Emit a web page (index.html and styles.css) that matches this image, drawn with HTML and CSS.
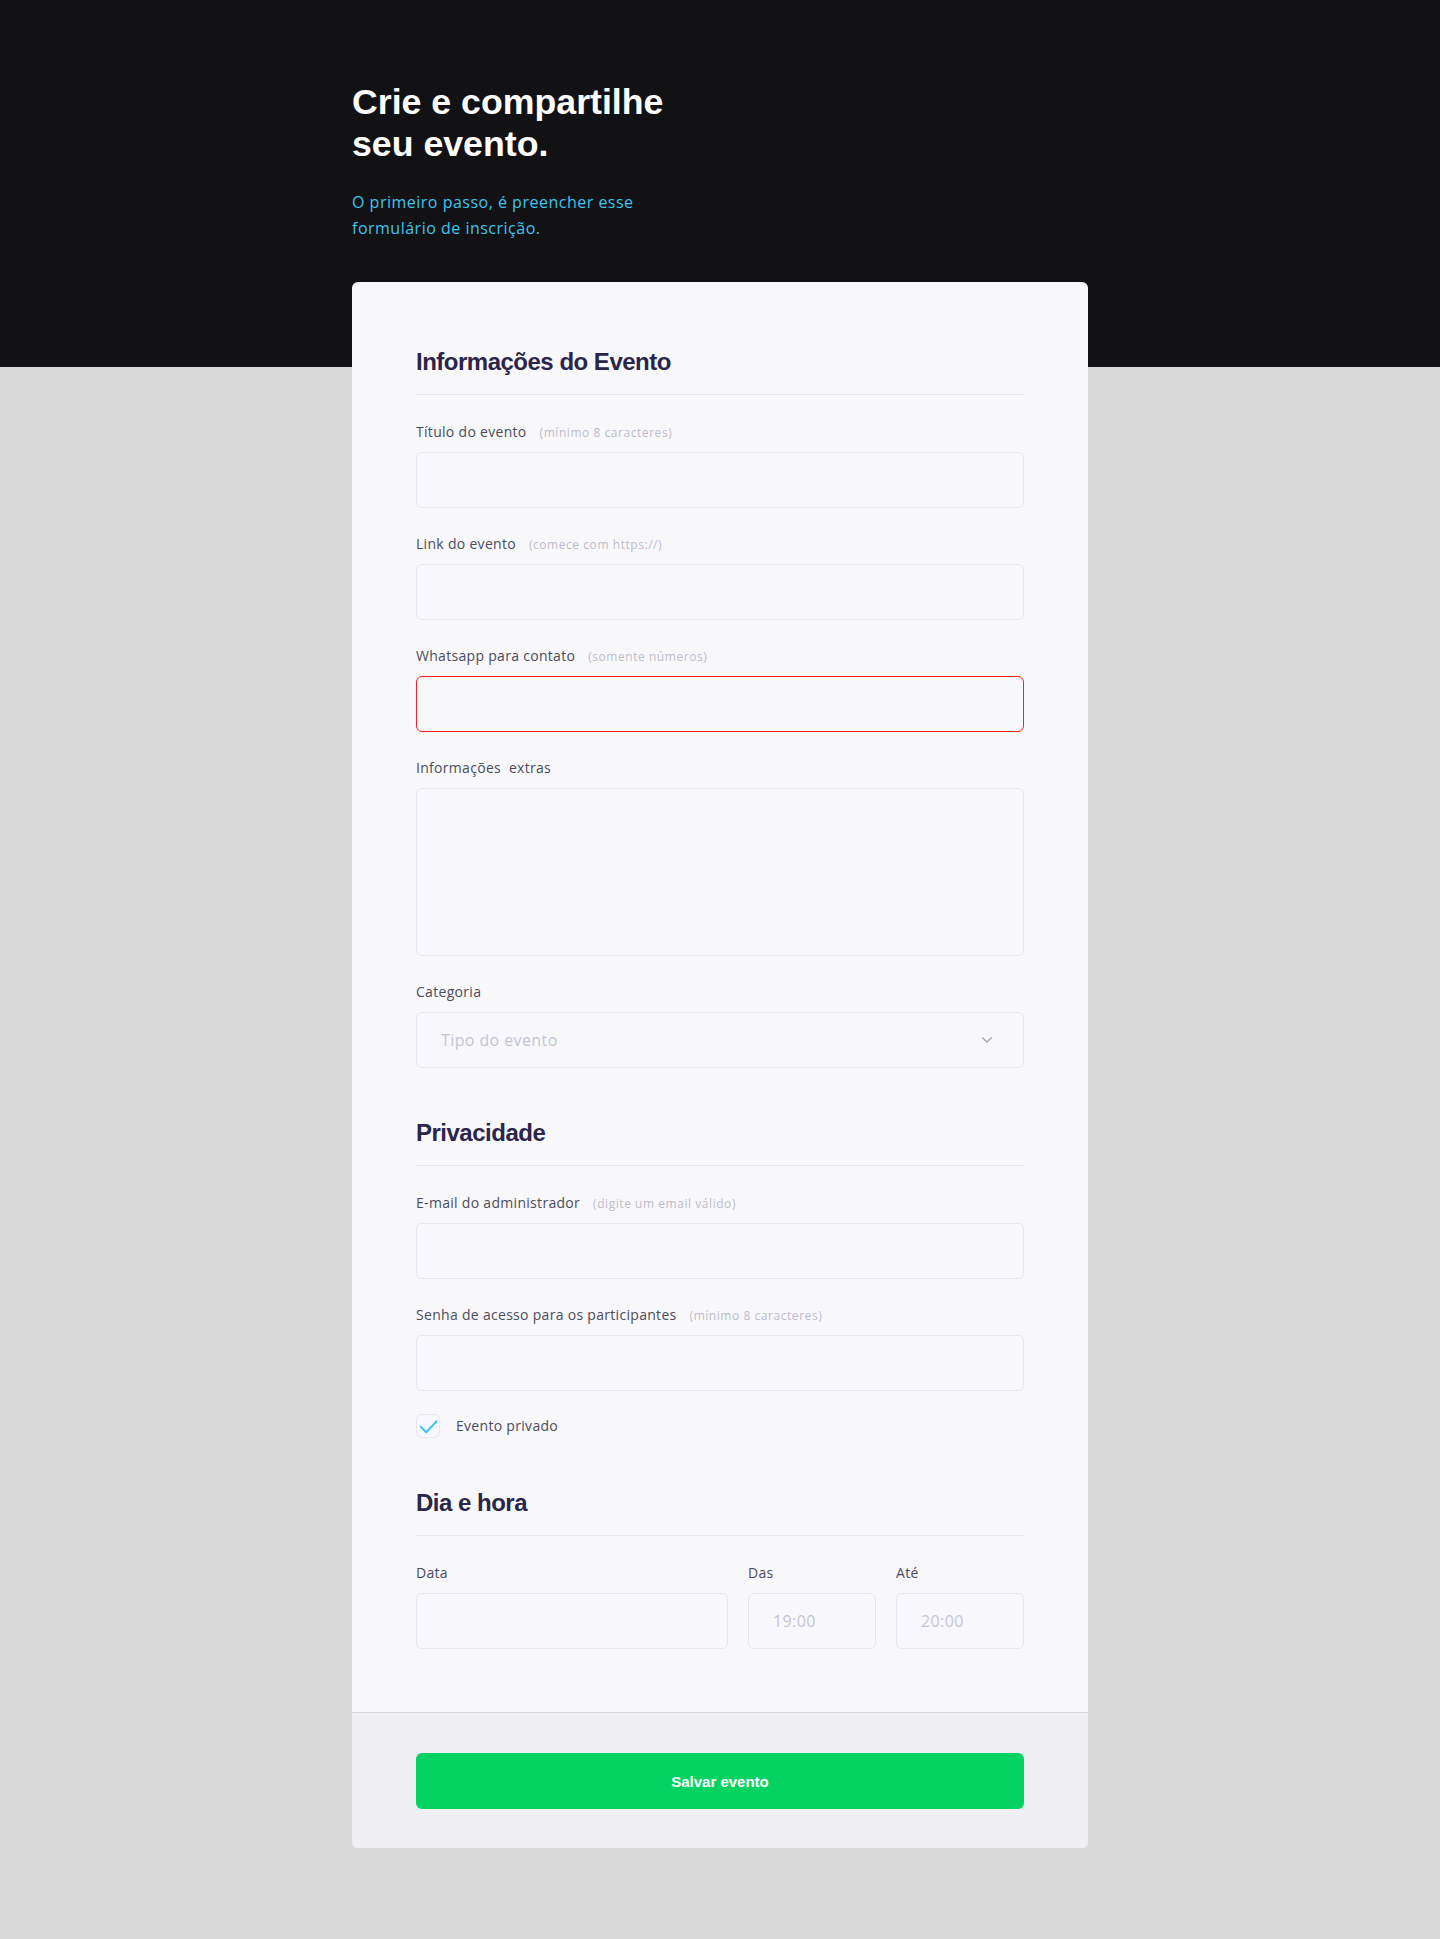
FILE: index.html
```html
<!DOCTYPE html>
<html lang="pt-BR">
<head>
<meta charset="utf-8">
<title>Crie e compartilhe seu evento</title>
<link rel="stylesheet" href="styles.css">
</head>
<body>
<header class="hero">
  <div class="hero-inner">
    <h1 class="hero-title">Crie e compartilhe<br>seu evento.</h1>
    <p class="hero-text">O primeiro passo, é preencher esse<br>formulário de inscrição.</p>
  </div>
</header>
<main class="page">
  <form class="card">
    <div class="card-body">
      <section class="section">
        <h2 class="section-title">Informações do Evento</h2>
        <div class="field">
          <label class="label">Título do evento <span class="hint">(mínimo 8 caracteres)</span></label>
          <input class="input" type="text">
        </div>
        <div class="field">
          <label class="label">Link do evento <span class="hint">(comece com https://)</span></label>
          <input class="input" type="text">
        </div>
        <div class="field">
          <label class="label">Whatsapp para contato <span class="hint">(somente números)</span></label>
          <input class="input input-error" type="text">
        </div>
        <div class="field">
          <label class="label">Informações&nbsp; extras</label>
          <textarea class="input textarea"></textarea>
        </div>
        <div class="field">
          <label class="label">Categoria</label>
          <div class="input select">
            <span class="placeholder">Tipo do evento</span>
            <svg class="chevron" width="12" height="8" viewBox="0 0 12 8"><path d="M1.5 1.8 L6 6 L10.5 1.8" fill="none" stroke="#a9a9b6" stroke-width="1.4" stroke-linecap="round" stroke-linejoin="round"/></svg>
          </div>
        </div>
      </section>

      <section class="section">
        <h2 class="section-title">Privacidade</h2>
        <div class="field">
          <label class="label">E-mail do administrador <span class="hint">(digite um email válido)</span></label>
          <input class="input" type="text">
        </div>
        <div class="field">
          <label class="label">Senha de acesso para os participantes <span class="hint">(mínimo 8 caracteres)</span></label>
          <input class="input" type="text">
        </div>
        <div class="check-row">
          <span class="checkbox">
            <svg width="24" height="24" viewBox="0 0 24 24"><path d="M4.8 12.8 L10.2 18.2 L20.6 7.2" fill="none" stroke="#3fc5ee" stroke-width="2" stroke-linecap="round" stroke-linejoin="round"/></svg>
          </span>
          <span class="check-label">Evento privado</span>
        </div>
      </section>

      <section class="section">
        <h2 class="section-title">Dia e hora</h2>
        <div class="date-row">
          <div class="field">
            <label class="label">Data</label>
            <input class="input" type="text">
          </div>
          <div class="field">
            <label class="label">Das</label>
            <input class="input" type="text" placeholder="19:00">
          </div>
          <div class="field">
            <label class="label">Até</label>
            <input class="input" type="text" placeholder="20:00">
          </div>
        </div>
      </section>
    </div>
    <div class="card-footer">
      <button class="btn" type="button">Salvar evento</button>
    </div>
  </form>
</main>
</body>
</html>
```
FILE: styles.css
```css
* { box-sizing: border-box; }

body {
  margin: 0;
  background: #d9d9d9;
  font-family: "Open Sans", "Noto Sans", sans-serif;
  color: #4b4b5c;
}

.hero {
  background: #121214;
  height: 367px;
  padding-top: 81px;
}

.hero-inner {
  width: 736px;
  margin: 0 auto;
}

.hero-title {
  margin: 0;
  font-family: "Liberation Sans", Arial, sans-serif;
  font-weight: 700;
  font-size: 35.7px;
  line-height: 42px;
  color: #ffffff;
}

.hero-text {
  margin: 24px 0 0;
  font-size: 16px;
  line-height: 26px;
  letter-spacing: 0.5px;
  color: #3fc5ee;
}

.page {
  padding-bottom: 91px;
}

.card {
  width: 736px;
  margin: -85px auto 0;
  background: #f8f8fb;
  border-radius: 6px;
  overflow: hidden;
}

.card-body {
  padding: 64px 64px 63px;
}

.section + .section {
  margin-top: 49px;
}

.section-title {
  margin: 0;
  padding-bottom: 16px;
  border-bottom: 1px solid #e6e6f0;
  font-family: "Liberation Sans", Arial, sans-serif;
  font-weight: 700;
  font-size: 24px;
  line-height: 32px;
  letter-spacing: -0.5px;
  color: #2b2549;
}

.field {
  display: flex;
  flex-direction: column;
  margin-top: 26px;
}

.section-title + .field,
.section-title + .date-row {
  margin-top: 27px;
}

.date-row .field {
  margin-top: 0;
}

.label {
  display: flex;
  align-items: baseline;
  height: 20px;
  font-size: 14px;
  line-height: 20px;
  letter-spacing: 0.3px;
  color: #4b4b5c;
  margin-bottom: 10px;
  white-space: nowrap;
}

.hint {
  margin-left: 13px;
  font-size: 12px;
  line-height: 20px;
  letter-spacing: 0.55px;
  color: #bdbccb;
}

.input {
  display: block;
  width: 100%;
  height: 56px;
  padding: 0 24px;
  border: 1px solid #e6e6f0;
  border-radius: 6px;
  background: #f8f8fc;
  font-family: "Open Sans", "Noto Sans", sans-serif;
  font-size: 16px;
  letter-spacing: 0.4px;
  color: #4b4b5c;
  outline: none;
}

.input::placeholder {
  color: #c5c4d3;
}

.input-error {
  border-color: #ff1f1f;
}

.textarea {
  height: 168px;
  resize: none;
  padding: 16px 24px;
}

.select {
  display: flex;
  align-items: center;
  justify-content: space-between;
  padding: 0 30px 0 24px;
}

.placeholder {
  color: #c5c4d3;
  font-size: 16px;
}

.chevron {
  display: block;
}

.check-row {
  display: flex;
  align-items: center;
  gap: 16px;
  margin-top: 23px;
}

.checkbox {
  display: flex;
  width: 24px;
  height: 24px;
  border: 1px solid #e6e6f0;
  border-radius: 6px;
  background: #f8f8fc;
  align-items: center;
  justify-content: center;
}

.checkbox svg {
  display: block;
  margin: -1px;
}

.check-label {
  font-size: 14px;
  line-height: 20px;
  letter-spacing: 0.3px;
  color: #4b4b5c;
}

.date-row {
  display: grid;
  grid-template-columns: 1fr 128px 128px;
  column-gap: 20px;
}

.card-footer {
  background: #efeff4;
  border-top: 1px solid #d6d6dc;
  padding: 40px 64px 39px;
}

.btn {
  display: block;
  width: 100%;
  height: 56px;
  border: 0;
  border-radius: 6px;
  background: #04d361;
  color: #ffffff;
  font-family: "Liberation Sans", Arial, sans-serif;
  font-weight: 700;
  font-size: 15px;
  cursor: pointer;
}
```
